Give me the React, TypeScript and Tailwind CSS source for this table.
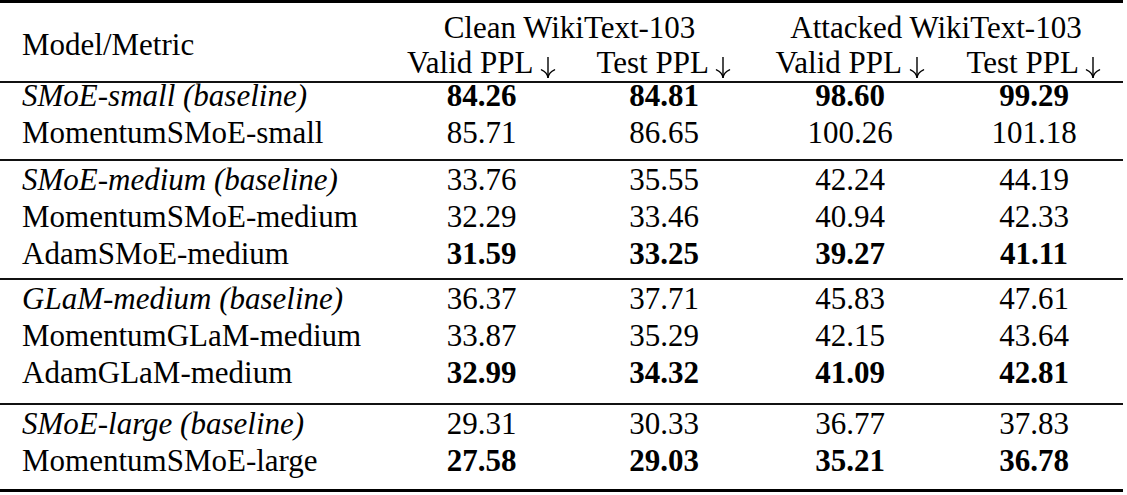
import React from 'react';

type Row = { name: string; italic?: boolean; best?: boolean; values: string[] };
type Group = { pad: string; rows: Row[] };

const groups: Group[] = [
  {
    pad: 'pt-0 pb-[1.5px]',
    rows: [
      { name: 'SMoE-small (baseline)', italic: true, best: true, values: ['84.26', '84.81', '98.60', '99.29'] },
      { name: 'MomentumSMoE-small', values: ['85.71', '86.65', '100.26', '101.18'] },
    ],
  },
  {
    pad: 'pt-[6.5px] pb-0',
    rows: [
      { name: 'SMoE-medium (baseline)', italic: true, values: ['33.76', '35.55', '42.24', '44.19'] },
      { name: 'MomentumSMoE-medium', values: ['32.29', '33.46', '40.94', '42.33'] },
      { name: 'AdamSMoE-medium', best: true, values: ['31.59', '33.25', '39.27', '41.11'] },
    ],
  },
  {
    pad: 'pt-[6px] pb-[5.5px]',
    rows: [
      { name: 'GLaM-medium (baseline)', italic: true, values: ['36.37', '37.71', '45.83', '47.61'] },
      { name: 'MomentumGLaM-medium', values: ['33.87', '35.29', '42.15', '43.64'] },
      { name: 'AdamGLaM-medium', best: true, values: ['32.99', '34.32', '41.09', '42.81'] },
    ],
  },
  {
    pad: 'pt-[6px] pb-[4.5px]',
    rows: [
      { name: 'SMoE-large (baseline)', italic: true, values: ['29.31', '30.33', '36.77', '37.83'] },
      { name: 'MomentumSMoE-large', best: true, values: ['27.58', '29.03', '35.21', '36.78'] },
    ],
  },
];

const cols = 'grid grid-cols-[387px_189px_176px_196px_172px]';

const ThickRule = () => <div className="h-[3px] bg-black" />;
const Rule = () => <div className="h-[2px] bg-[#111]" />;

// LaTeX-style \downarrow: thin stem, curved barbs
const DownArrow = () => (
  <svg viewBox="0 0 16 21" className="inline-block w-[16px] h-[21px] align-[-5px]" fill="none" stroke="black" strokeWidth="1.4" strokeLinecap="round">
    <path d="M8 0.5 V20" />
    <path d="M8 20.3 C7.2 16.6 4.8 14.2 1.5 12.8" />
    <path d="M8 20.3 C8.8 16.6 11.2 14.2 14.5 12.8" />
  </svg>
);

const Metric = ({ label }: { label: string }) => (
  <div className="text-center whitespace-nowrap">
    {label} <DownArrow />
  </div>
);

export default function App() {
  return (
    <div className="w-[1123px] bg-white text-black text-[31px] font-['Liberation_Serif',_'Times_New_Roman',_serif]">
      <ThickRule />
      <div className={`${cols} grid-rows-[35px_31px] leading-[25px] pt-[12px]`}>
        <div className="row-span-2 pl-[22px] pt-[17px]">Model/Metric</div>
        <div className="col-span-2 text-center">Clean WikiText-103</div>
        <div className="col-span-2 text-center">Attacked WikiText-103</div>
        <Metric label="Valid PPL" />
        <Metric label="Test PPL" />
        <Metric label="Valid PPL" />
        <Metric label="Test PPL" />
      </div>
      {groups.map((g, gi) => (
        <React.Fragment key={gi}>
          <Rule />
          <div className={g.pad}>
            {g.rows.map((r) => (
              <div key={r.name} className={`${cols} h-[37px] leading-[25px]`}>
                <div className={`pl-[22px] whitespace-nowrap ${r.italic ? 'italic' : ''}`}>{r.name}</div>
                {r.values.map((v, i) => (
                  <div key={i} className={`text-center ${r.best ? 'font-bold' : ''}`}>
                    {v}
                  </div>
                ))}
              </div>
            ))}
          </div>
        </React.Fragment>
      ))}
      <ThickRule />
    </div>
  );
}
